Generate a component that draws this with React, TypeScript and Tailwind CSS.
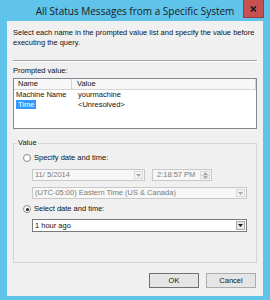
import React from "react";

function Arrow({ disabled }: { disabled?: boolean }) {
  return (
    <svg width="5" height="3" viewBox="0 0 5 3">
      <path d="M0 0h5L2.5 3z" fill={disabled ? "#a8a8a8" : "#1a1a1a"} />
    </svg>
  );
}

function DropButton({ disabled }: { disabled?: boolean }) {
  return (
    <div
      className={`m-[1px] flex w-[9px] items-center justify-center border ${
        disabled ? "border-[#d9d9d9] bg-[#f3f3f3]" : "border-[#acacac] bg-[#e6e6e6]"
      }`}
    >
      <Arrow disabled={disabled} />
    </div>
  );
}

function Radio({ checked }: { checked?: boolean }) {
  return (
    <div className="flex h-[8px] w-[8px] items-center justify-center rounded-full border border-[#8a8a8a] bg-white">
      {checked && <div className="h-[3px] w-[3px] rounded-full bg-[#222]" />}
    </div>
  );
}

export default function App() {
  return (
    <div className="flex h-[300px] w-[270px] flex-col bg-[#5fc3ea] font-['Liberation_Sans',Arial,sans-serif] text-[7.5px] leading-[10px] text-[#111]">
      {/* title bar */}
      <div className="grid h-[21px] shrink-0 grid-cols-[1fr_auto_1fr] items-start">
        <div />
        <div className="pt-[3px] font-['Open_Sans',sans-serif] text-[10px] leading-[16px] text-[#1b1b1b]">
          All Status Messages from a Specific System
        </div>
        <div className="flex justify-end pr-[6px]">
          <div className="flex h-[18px] w-[21px] items-center justify-center border border-t-0 border-[#9e3b3b] bg-[#c75050]">
            <svg width="7" height="6" viewBox="0 0 7 6">
              <path d="M1 0.5l5 5M6 0.5l-5 5" stroke="#1a1a1a" strokeWidth="1.6" />
            </svg>
          </div>
        </div>
      </div>

      {/* client area */}
      <div className="mx-[7px] mb-[4px] flex h-[275px] shrink-0 flex-col bg-[#f0f0f0] px-[6px] pt-[7px]">
        <p className="h-[20px] shrink-0">
          Select each name in the prompted value list and specify the value before
          <br />
          executing the query.
        </p>
        <div className="mt-[12px] h-[2px] shrink-0 border-t border-b border-t-[#a0a0a0] border-b-white" />
        <div className="mt-[4px] h-[10px] shrink-0">Prompted value:</div>

        {/* list view */}
        <div className="mt-[2px] h-[51px] shrink-0 border border-[#828790] bg-white">
          <div className="flex h-[11px] border-b border-[#d5d5d5] bg-[#f7f7f7] leading-[10px]">
            <div className="w-[58px] border-r border-[#d5d5d5] pl-[4px]">Name</div>
            <div className="flex-1 border-r border-[#d5d5d5] pl-[5px]">Value</div>
          </div>
          <div className="flex h-[10px]">
            <div className="w-[59px] pl-[2px]">Machine Name</div>
            <div className="pl-[5px]">yourmachine</div>
          </div>
          <div className="flex h-[10px]">
            <div className="w-[59px] pl-[2px]">
              <span className="bg-[#3399ff] px-[2px] text-white">Time</span>
            </div>
            <div className="pl-[5px]">&lt;Unresolved&gt;</div>
          </div>
        </div>

        {/* value group */}
        <div className="relative mt-[14px] shrink-0 border border-[#d5d5d5] pl-[9px] pt-[9px]">
          <div className="absolute -top-[6px] left-[3px] bg-[#f0f0f0] px-[1px]">Value</div>

          <div className="flex h-[10px] items-center gap-[3px]">
            <Radio />
            <span>Specify date and time:</span>
          </div>

          <div className="ml-[9px] mt-[6px] flex h-[12px]">
            <div className="flex w-[113px] border border-[#c8c8c8] bg-[#f7f7f7]">
              <div className="flex-1 pl-[2px] leading-[10px] text-[#7a7a7a]">11/ 5/2014</div>
              <DropButton disabled />
            </div>
            <div className="ml-[7px] flex w-[60px] border border-[#c8c8c8] bg-[#f7f7f7]">
              <div className="flex-1 pl-[4px] leading-[10px] text-[#7a7a7a]">2:18:57 PM</div>
              <div className="m-[1px] flex w-[10px] flex-col border border-[#d9d9d9] bg-[#f3f3f3]">
                <div className="flex flex-1 items-center justify-center border-b border-[#d9d9d9]">
                  <svg width="5" height="3" viewBox="0 0 5 3">
                    <path d="M0 3h5L2.5 0z" fill="#a8a8a8" />
                  </svg>
                </div>
                <div className="flex flex-1 items-center justify-center">
                  <Arrow disabled />
                </div>
              </div>
            </div>
          </div>

          <div className="ml-[9px] mr-[9px] mt-[6px] flex h-[12px] border border-[#c8c8c8] bg-[#f7f7f7]">
            <div className="flex-1 pl-[2px] leading-[10px] text-[#7a7a7a]">
              (UTC-05:00) Eastern Time (US &amp; Canada)
            </div>
            <DropButton disabled />
          </div>

          <div className="mt-[5px] flex h-[10px] items-center gap-[3px]">
            <Radio checked />
            <span>Select date and time:</span>
          </div>

          <div className="ml-[9px] mr-[9px] mt-[5px] flex h-[13px] border border-[#7a7a7a] bg-white">
            <div className="flex-1 pl-[2px] leading-[11px]">1 hour ago</div>
            <DropButton />
          </div>

          <div className="h-[30px]" />
        </div>

        {/* buttons */}
        <div className="mt-[10px] flex h-[15px] shrink-0 justify-end gap-[7px] pr-[1px]">
          <button className="h-[15px] w-[50px] border border-[#707070] bg-[#e5e5e5] leading-[13px]">OK</button>
          <button className="h-[15px] w-[50px] border border-[#acacac] bg-[#e5e5e5] leading-[13px]">Cancel</button>
        </div>
      </div>
    </div>
  );
}
